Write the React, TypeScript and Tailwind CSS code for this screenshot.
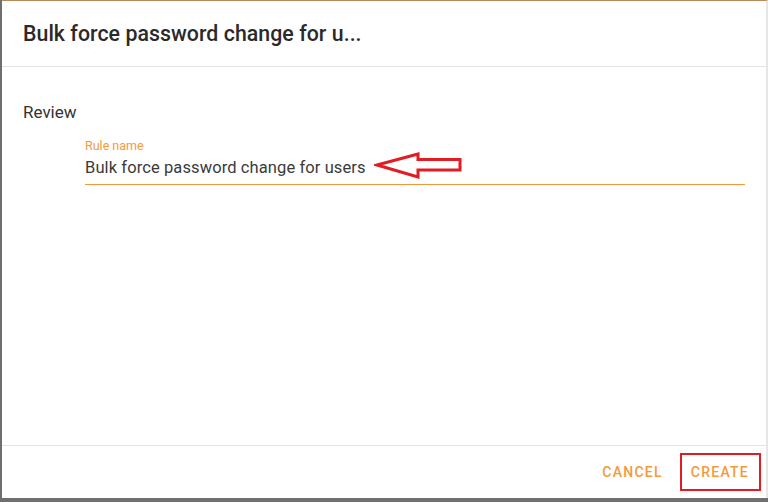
import React from "react"

export default function App() {
  return (
    <div className="h-[502px] w-[768px] overflow-hidden bg-[#6f6f6f] pl-[2px] pb-[4px] font-['Roboto','Liberation_Sans',sans-serif]">
      <div className="relative flex h-full flex-col border-t border-r-[2px] border-t-[#b98a5e] border-r-[#e6e6e6] bg-white">
        {/* header */}
        <div className="flex h-[66px] items-center border-b border-[#e4e4e4] px-[21px]">
          <h1 className="text-[21.3px] font-medium tracking-[0.05px] text-[#2a2a2a]">
            Bulk force password change for u...
          </h1>
        </div>

        {/* content */}
        <div className="flex-1 px-[21px] pt-[35px]">
          <h2 className="text-[17px] leading-5 text-[#333]">Review</h2>
          <div className="ml-[62px] mt-[17px] border-b-[1.5px] border-[#f5993a] pb-[6px]">
            <label className="block text-[12.5px] leading-[14px] text-[#f5993a]">
              Rule name
            </label>
            <div className="mt-[5px] text-[16.5px] leading-5 tracking-[0.1px] text-[#3a3a3a]">
              Bulk force password change for users
            </div>
          </div>
        </div>

        {/* footer */}
        <div className="flex h-[53px] items-center justify-end gap-[9px] border-t border-[#e4e4e4] pb-[1px] pr-[5px]">
          <button className="px-[8px] py-[8px] text-[14px] font-medium leading-4 tracking-[1.25px] text-[#f5993a]">
            CANCEL
          </button>
          <button className="border-2 border-[#e31b23] pl-[9px] pr-[10px] pt-[9px] pb-[9px] text-[14px] font-medium leading-4 tracking-[1.25px] text-[#f5993a]">
            CREATE
          </button>
        </div>

        {/* annotation arrow */}
        <svg
          className="absolute left-[372px] top-[151px]"
          width="92"
          height="30"
          viewBox="0 0 92 30"
        >
          <path
            d="M3 13 L44 2 L44 7.5 L86 7.5 L86 18 L44 18 L44 25 Z"
            fill="none"
            stroke="#e31b23"
            strokeWidth="3"
            strokeLinejoin="miter"
          />
        </svg>
      </div>
    </div>
  )
}
